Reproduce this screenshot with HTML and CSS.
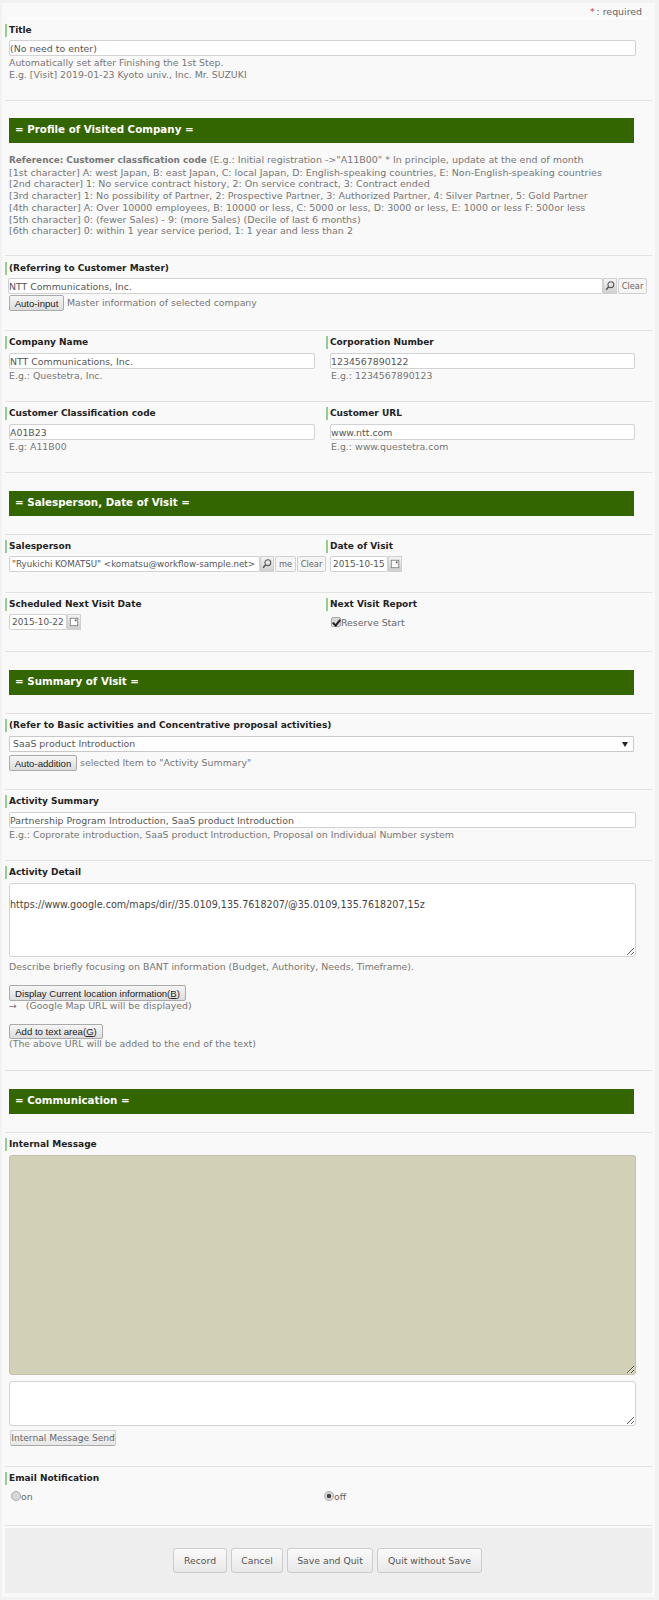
FILE: index.html
```html
<!DOCTYPE html>
<html lang="en">
<head>
<meta charset="utf-8">
<title>Visit Report</title>
<link rel="stylesheet" href="styles.css">
</head>
<body>
<div class="page">
  <div class="req"><span class="star">*</span>: required</div>

  <section class="row r-title">
    <div class="lab">Title</div>
    <input class="in full" value="(No need to enter)">
    <div class="hint">Automatically set after Finishing the 1st Step.<br>E.g. [Visit] 2019-01-23 Kyoto univ., Inc. Mr. SUZUKI</div>
  </section>

  <section class="row band-row first"><h2 class="band">= Profile of Visited Company =</h2>
    <div class="hint ref"><b>Reference: Customer classfication code</b> (E.g.: Initial registration -&gt;"A11B00" * In principle, update at the end of month<br>[1st character] A: west Japan, B: east Japan, C: local Japan, D: English-speaking countries, E: Non-English-speaking countries<br>[2nd character] 1: No service contract history, 2: On service contract, 3: Contract ended<br>[3rd character] 1: No possibility of Partner, 2: Prospective Partner, 3: Authorized Partner, 4: Silver Partner, 5: Gold Partner<br>[4th character] A: Over 10000 employees, B: 10000 or less, C: 5000 or less, D: 3000 or less, E: 1000 or less F: 500or less<br>[5th character] 0: (fewer Sales) - 9: (more Sales) (Decile of last 6 months)<br>[6th character] 0: within 1 year service period, 1: 1 year and less than 2</div>
  </section>

  <section class="row r-master">
    <div class="lab">(Referring to Customer Master)</div>
    <div class="line master">
      <input class="in grow" value="NTT Communications, Inc.">
      <button class="ic" aria-label="Search"><svg viewBox="0 0 14 14" width="12" height="12"><circle cx="8" cy="5.5" r="3.4" fill="none" stroke="#555" stroke-width="1.2"/><path d="M5.5 8 2.5 11.5" stroke="#555" stroke-width="1.8"/></svg></button>
      <button class="sm clear">Clear</button>
    </div>
    <div class="line after"><button class="btn b-input">Auto-input</button><span class="hint inl">Master information of selected company</span></div>
  </section>

  <section class="row two r-two">
    <div class="col"><div class="lab">Company Name</div><input class="in" value="NTT Communications, Inc."><div class="hint">E.g.: Questetra, Inc.</div></div>
    <div class="col"><div class="lab">Corporation Number</div><input class="in" value="1234567890122"><div class="hint">E.g.: 1234567890123</div></div>
  </section>

  <section class="row two r-two">
    <div class="col"><div class="lab">Customer Classification code</div><input class="in" value="A01B23"><div class="hint">E.g: A11B00</div></div>
    <div class="col"><div class="lab">Customer URL</div><input class="in" value="www.ntt.com"><div class="hint">E.g.: www.questetra.com</div></div>
  </section>

  <section class="row band-row"><h2 class="band">= Salesperson, Date of Visit =</h2></section>

  <section class="row two r-sales">
    <div class="col"><div class="lab">Salesperson</div>
      <div class="line">
        <input class="in person" value="&quot;Ryukichi KOMATSU&quot; &lt;komatsu@workflow-sample.net&gt;">
        <button class="ic" aria-label="Search"><svg viewBox="0 0 14 14" width="12" height="12"><circle cx="8" cy="5.5" r="3.4" fill="none" stroke="#555" stroke-width="1.2"/><path d="M5.5 8 2.5 11.5" stroke="#555" stroke-width="1.8"/></svg></button>
        <button class="sm me">me</button><button class="sm clear2">Clear</button>
      </div>
    </div>
    <div class="col"><div class="lab">Date of Visit</div>
      <div class="line"><input class="in date" value="2015-10-15"><button class="ic cal" aria-label="Calendar"><svg viewBox="0 0 12 12" width="10" height="10"><rect x="1.5" y="1.5" width="9" height="9" fill="#fff" stroke="#777"/><rect x="7" y="3" width="2" height="2" fill="#555"/></svg></button></div>
    </div>
  </section>

  <section class="row two r-next">
    <div class="col"><div class="lab">Scheduled Next Visit Date</div>
      <div class="line"><input class="in date" value="2015-10-22"><button class="ic cal" aria-label="Calendar"><svg viewBox="0 0 12 12" width="10" height="10"><rect x="1.5" y="1.5" width="9" height="9" fill="#fff" stroke="#777"/><rect x="7" y="3" width="2" height="2" fill="#555"/></svg></button></div>
    </div>
    <div class="col"><div class="lab">Next Visit Report</div>
      <label class="check"><input class="box" type="checkbox" checked>Reserve Start</label>
    </div>
  </section>

  <section class="row band-row"><h2 class="band">= Summary of Visit =</h2></section>

  <section class="row r-refer">
    <div class="lab">(Refer to Basic activities and Concentrative proposal activities)</div>
    <div class="select"><span>SaaS product Introduction</span><span class="arrow"></span></div>
    <div class="line after"><button class="btn b-addition">Auto-addition</button><span class="hint inl">selected Item to "Activity Summary"</span></div>
  </section>

  <section class="row r-summary">
    <div class="lab">Activity Summary</div>
    <input class="in full" value="Partnership Program Introduction, SaaS product Introduction">
    <div class="hint">E.g.: Coprorate introduction, SaaS product Introduction, Proposal on Individual Number system</div>
  </section>

  <section class="row r-detail">
    <div class="lab">Activity Detail</div>
    <textarea class="ta ta-detail">https://www.google.com/maps/dir//35.0109,135.7618207/@35.0109,135.7618207,15z</textarea>
    <div class="hint d-hint">Describe briefly focusing on BANT information (Budget, Authority, Needs, Timeframe).</div>
    <button class="btn b-loc">Display Current location information(<u>B</u>)</button>
    <div class="hint tight">→&nbsp;&nbsp;&nbsp;(Google Map URL will be displayed)</div>
    <button class="btn b-add">Add to text area(<u>G</u>)</button>
    <div class="hint tight">(The above URL will be added to the end of the text)</div>
  </section>

  <section class="row band-row"><h2 class="band">= Communication =</h2></section>

  <section class="row r-comm">
    <div class="lab">Internal Message</div>
    <textarea class="ta ta-log" readonly></textarea>
    <textarea class="ta ta-msg"></textarea>
    <button class="sm send">Internal Message Send</button>
  </section>

  <section class="row r-mail">
    <div class="lab">Email Notification</div>
    <div class="two mail">
      <label class="check c-on"><input class="rad" type="radio" name="n">on</label>
      <label class="check"><input class="rad" type="radio" name="n" checked>off</label>
    </div>
  </section>

  <footer class="foot">
    <button class="act a1">Record</button><button class="act a2">Cancel</button><button class="act a3">Save and Quit</button><button class="act a4">Quit without Save</button>
  </footer>
</div>
</body>
</html>
```

FILE: styles.css
```css
* { box-sizing: border-box; }
html, body { margin: 0; background: #f2f2f2; }
body { padding: 3px 0 0 2px; font: 9.4px/12px "DejaVu Sans", Verdana, sans-serif; color: #666; }
.page { width: 653px; height: 1594px; padding: 0 3px; background: #f9f9f9; }
.req { height: 16px; text-align: right; padding: 3px 10px 0 0; border-bottom: 1px solid #fdfdfd; }
.star { margin-right: 2px; color: #c33; }
.row { border-bottom: 1px solid #e2e2e2; padding-top: 5px; }
.lab { height: 13px; margin-bottom: 3px; border-left: 2px solid #8fcf8f; padding-left: 2px; font-weight: bold; font-size: 9px; line-height: 13px; color: #222; }
.in { display: block; height: 16px; border: 1px solid #d2d2d2; border-radius: 2px; background: #fff; padding: 0; font: 9.4px "DejaVu Sans", sans-serif; color: #555; outline: 0; }
.full { width: 627px; margin-left: 4px; }
.hint { margin: 1px 0 0 4px; color: #777; }
.inl { margin: 0 0 0 3px; }
.r-title { height: 82px; }
.band-row { height: 62px; padding: 18px 0 0 4px; }
.first { height: 155px; padding-top: 17px; }
.band { margin: 0; width: 625px; height: 25px; background: #336600; color: #fff; font: bold 10.3px/23px "DejaVu Sans", sans-serif; padding-left: 6px; }
.ref { margin: 11px 0 0; font-size: 9.5px; line-height: 11.7px; white-space: nowrap; }
.ref b { font-size: 8.9px; }
.line { display: flex; align-items: flex-start; margin-left: 4px; }
.master { margin: 0 5px 0 3px; }
.after { margin-top: 1px; align-items: center; }
.r-master { height: 75px; padding-top: 6px; }
.r-refer { height: 76px; }
.r-refer .lab { margin-bottom: 4px; }
.r-refer .after { margin-top: 3px; }
.grow { flex: 1; min-width: 0; }
.ic { flex: none; width: 14px; height: 16px; padding: 0; border: 1px solid #d0d0d0; background: linear-gradient(#f4f4f4, #d0d0d0); display: flex; align-items: center; justify-content: center; }
.sm { flex: none; height: 16px; padding: 0; border: 1px solid #d0d0d0; border-radius: 2px; background: #f5f5f5; font: 8.3px "DejaVu Sans", sans-serif; color: #666; margin-left: 1px; }
.clear, .clear2 { width: 29px; }
.me { width: 21px; }
.btn { flex: none; height: 16px; padding: 0; border: 1px solid #aaa; border-radius: 2px; background: linear-gradient(#f6f6f6, #ddd); font: 9.6px "Liberation Sans", sans-serif; color: #222; white-space: nowrap; }
.b-input { width: 55px; }
.b-addition { width: 68px; }
.two { display: grid; grid-template-columns: 321px 1fr; }
.r-two { height: 71px; }
.two .lab { margin-bottom: 4px; }
.col .in { width: 306px; margin-left: 4px; }
.col:last-child .in { width: 305px; margin-left: 4px; }
.col:last-child .hint { margin-left: 5px; }
.r-sales { height: 58px; }
.r-next { height: 59px; }
.r-sales .lab, .r-next .lab { margin-bottom: 3px; }
.col .in.person { width: 251px; margin: 0; font-size: 8.7px; padding: 0 0 0 2px; }
.col .in.date, .col:last-child .in.date { width: 58px; margin: 0; padding: 0 2px; font-size: 8.9px; }
.col:last-child .line { margin-left: 4px; }
.check { display: flex; align-items: flex-start; color: #666; }
.col .check { margin: 6px 0 0 5px; }
.box, .rad { appearance: none; flex: none; margin: 0; width: 10px; height: 10px; border: 1px solid #aaa; background: #d8d8d8; }
.box { position: relative; border-radius: 2px; }
.box:checked::after { content: ""; position: absolute; left: 2px; top: 0; width: 3px; height: 6px; border: solid #222; border-width: 0 2px 2px 0; transform: rotate(40deg); }
.rad { border-radius: 50%; }
.rad:checked { background: radial-gradient(circle, #444 0 2px, #d8d8d8 2.5px); }
.select { display: flex; justify-content: space-between; align-items: center; height: 16px; width: 625px; margin-left: 4px; background: #fff; border: 1px solid #c8c8c8; border-radius: 1px; padding: 0 5px 0 3px; font-size: 9.4px; color: #555; }
.arrow { border: 3px solid transparent; border-top: 5px solid #222; border-bottom: 0; }
.ta { display: block; border: 1px solid #d2d2d2; border-radius: 3px; background: #fff; width: 627px; margin-left: 4px; font: 9.6px/12px "DejaVu Sans", sans-serif; color: #444; padding: 0; outline: 0; }
.r-summary { height: 71px; }
.r-summary .lab { margin-bottom: 4px; }
.r-detail { height: 210px; }
.r-detail .lab { margin-bottom: 4px; }
.ta-detail { height: 74px; padding-top: 15px; }
.d-hint { margin-top: 4px; }
.tight { margin-top: -1px; }
.b-loc { display: block; width: 177px; margin: 12px 0 0 4px; }
.b-add { display: block; width: 94px; height: 15px; margin: 12px 0 0 4px; }
.r-comm { height: 334px; }
.r-comm .lab { margin-bottom: 4px; }
.ta-log { height: 220px; background: #d3d0b8; border-color: #c4c1a8; }
.ta-msg { height: 45px; margin-top: 6px; }
.send { display: block; width: 106px; margin: 4px 0 0 5px; font-size: 9.1px; white-space: nowrap; border-bottom-color: #aaa; background: linear-gradient(#f8f8f8, #e6e6e6); }
.r-mail { height: 59px; }
.r-mail .lab { margin-bottom: 6px; }
.mail { grid-template-columns: 319px 1fr; }
.c-on { margin-left: 6px; }
.foot { height: 65px; margin-top: 2px; padding-right: 2px; background: #eee; display: flex; justify-content: center; align-items: center; gap: 4px; }
.act { height: 25px; padding: 0; background: linear-gradient(#fafafa, #e8e8e8); border: 1px solid #ccc; border-radius: 3px; font: 9.3px "DejaVu Sans", sans-serif; color: #555; }
.a1 { width: 54px; }
.a2 { width: 52px; }
.a3 { width: 86px; }
.a4 { width: 105px; }
```
